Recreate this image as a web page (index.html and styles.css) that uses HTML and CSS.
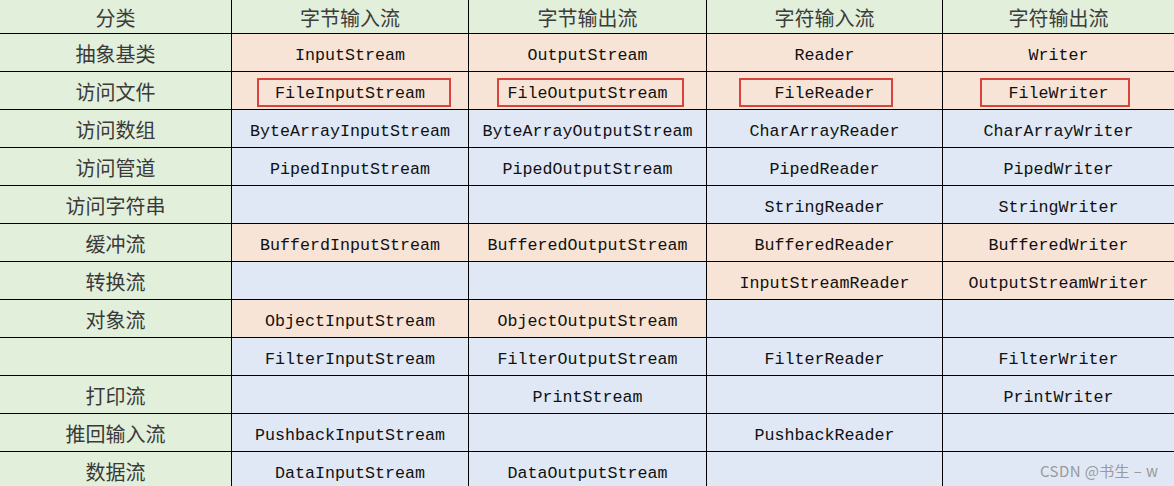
FILE: index.html
```html
<!DOCTYPE html>
<html lang="zh">
<head>
<meta charset="utf-8">
<title>IO 流分类</title>
<link rel="stylesheet" href="styles.css">
</head>
<body>
<div class="sheet">
  <div class="c g zh hd">分类</div>
  <div class="c g zh hd">字节输入流</div>
  <div class="c g zh hd">字节输出流</div>
  <div class="c g zh hd">字符输入流</div>
  <div class="c g zh hd">字符输出流</div>

  <div class="c g zh">抽象基类</div>
  <div class="c p en">InputStream</div>
  <div class="c p en">OutputStream</div>
  <div class="c p en">Reader</div>
  <div class="c p en">Writer</div>

  <div class="c g zh">访问文件</div>
  <div class="c p en">FileInputStream<span class="mark m1"></span></div>
  <div class="c p en">FileOutputStream<span class="mark m2"></span></div>
  <div class="c p en">FileReader<span class="mark m3"></span></div>
  <div class="c p en">FileWriter<span class="mark m4"></span></div>

  <div class="c g zh">访问数组</div>
  <div class="c b en">ByteArrayInputStream</div>
  <div class="c b en">ByteArrayOutputStream</div>
  <div class="c b en">CharArrayReader</div>
  <div class="c b en">CharArrayWriter</div>

  <div class="c g zh">访问管道</div>
  <div class="c b en">PipedInputStream</div>
  <div class="c b en">PipedOutputStream</div>
  <div class="c b en">PipedReader</div>
  <div class="c b en">PipedWriter</div>

  <div class="c g zh">访问字符串</div>
  <div class="c b en"></div>
  <div class="c b en"></div>
  <div class="c b en">StringReader</div>
  <div class="c b en">StringWriter</div>

  <div class="c g zh">缓冲流</div>
  <div class="c p en">BufferdInputStream</div>
  <div class="c p en">BufferedOutputStream</div>
  <div class="c p en">BufferedReader</div>
  <div class="c p en">BufferedWriter</div>

  <div class="c g zh">转换流</div>
  <div class="c b en"></div>
  <div class="c b en"></div>
  <div class="c p en">InputStreamReader</div>
  <div class="c p en">OutputStreamWriter</div>

  <div class="c g zh">对象流</div>
  <div class="c p en">ObjectInputStream</div>
  <div class="c p en">ObjectOutputStream</div>
  <div class="c b en"></div>
  <div class="c b en"></div>

  <div class="c g zh"></div>
  <div class="c b en">FilterInputStream</div>
  <div class="c b en">FilterOutputStream</div>
  <div class="c b en">FilterReader</div>
  <div class="c b en">FilterWriter</div>

  <div class="c g zh">打印流</div>
  <div class="c b en"></div>
  <div class="c b en">PrintStream</div>
  <div class="c b en"></div>
  <div class="c b en">PrintWriter</div>

  <div class="c g zh">推回输入流</div>
  <div class="c b en">PushbackInputStream</div>
  <div class="c b en"></div>
  <div class="c b en">PushbackReader</div>
  <div class="c b en"></div>

  <div class="c g zh">数据流</div>
  <div class="c b en">DataInputStream</div>
  <div class="c b en">DataOutputStream</div>
  <div class="c b en"></div>
  <div class="c b en"></div>
</div>
<div class="watermark">CSDN @书生 <span class="dash">–</span> w</div>
</body>
</html>
```

FILE: styles.css
```css
html, body {
  margin: 0;
  padding: 0;
  width: 1174px;
  height: 486px;
  overflow: hidden;
  background: #dfe8f4;
}

.sheet {
  display: grid;
  grid-template-columns: 231px 236px 237px 235px 231px;
  grid-template-rows: 33px repeat(12, 37px);
  gap: 1px;
  background: #000;
}

.c {
  position: relative;
  display: flex;
  align-items: center;
  justify-content: center;
  white-space: nowrap;
}

.g { background: #e2efda; }
.p { background: #f8e4d6; }
.b { background: #dfe8f4; }

.zh {
  font-family: "Noto Sans CJK SC", "Liberation Serif", serif;
  font-size: 20px;
  color: #3a3a3a;
  padding-top: 2px;
}

.hd { color: #3c3c3c; }

.en {
  font-family: "Liberation Mono", monospace;
  font-size: 16.67px;
  color: #111;
  padding-top: 5px;
}

.mark {
  position: absolute;
  top: 6px;
  height: 29px;
  box-sizing: border-box;
  border: 2px solid #d9433b;
}
.m1 { left: 25px; width: 194px; }
.m2 { left: 28px; width: 187px; }
.m3 { left: 32px; width: 154px; }
.m4 { left: 37px; width: 150px; }

.watermark {
  position: absolute;
  left: 1040px;
  top: 460px;
  font-family: "Noto Sans CJK SC", "Liberation Sans", sans-serif;
  font-size: 15px;
  color: #9a9a9a;
  letter-spacing: 0.4px;
  white-space: nowrap;
}
```
